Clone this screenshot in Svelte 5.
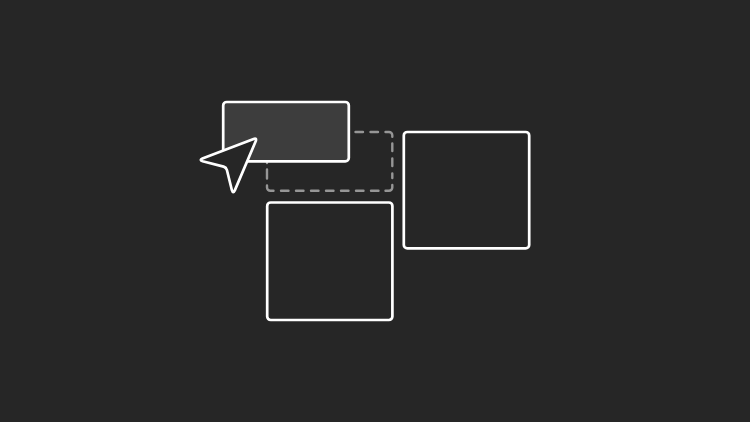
<script>
    // Shapes of the drag-and-drop diagram
    const boxes = [
        { x: 403.8, y: 132, w: 125.4, h: 116.4 },
        { x: 267.2, y: 202.5, w: 125.2, h: 117.5 }
    ];

    // Drop target outline, dash by dash, so the corners land like the design
    const ghost = [
        "M355.5 132h7.5", "M370.5 132h7.5", "M385.5 132h3.5a3.3 3.3 0 0 1 3.3 3.3v1.5",
        "M392.3 143.5v7.5", "M392.3 158.5v7.5", "M392.3 173.5v4.5",
        "M392.3 185v2.5a3.3 3.3 0 0 1 -3.3 3.3h-3.5",
        "M378.5 190.8h-7.5", "M363.5 190.8h-7.5", "M348.5 190.8h-7.5", "M333.5 190.8h-7.5",
        "M318.5 190.8h-7.5", "M303.5 190.8h-7.5", "M288.5 190.8h-7.5",
        "M273.5 190.8h-3.2a3.3 3.3 0 0 1 -3.3 -3.3v-2",
        "M267 178.5v-9", "M267 163v-1"
    ].join(" ");
</script>

<main class="stage">
    <svg class="diagram" viewBox="0 0 750 422" role="img" aria-label="Box being dragged with a cursor between other boxes">
        <path class="ghost" d={ghost} />
        {#each boxes as box}
            <rect class="box" x={box.x} y={box.y} width={box.w} height={box.h} rx="3.5" />
        {/each}
        <rect class="box dragged" x="223.2" y="102" width="125.6" height="59.4" rx="3.5" />
        <path
            class="cursor"
            d="M253.6 139 Q256.8 137.7 255.8 141 L234.8 190.4 Q233 194 231.9 190.2 L226.9 170 Q226.2 167.4 223.6 166.6 L202.6 161.2 Q199 160 202.4 158.6 Z"
        />
    </svg>
</main>

<style>
    :global(body) {
        margin: 0;
        background: #262626;
    }

    .stage {
        width: 750px;
        height: 422px;
        overflow: hidden;
        background: #262626;
    }

    .diagram {
        display: block;
        width: 100%;
        height: 100%;
    }

    .box {
        fill: none;
        stroke: #fff;
        stroke-width: 2.7;
    }

    .dragged { fill: #3d3d3d; }

    .ghost {
        fill: none;
        stroke: #969696;
        stroke-width: 2.4;
        stroke-linecap: round;
    }

    .cursor {
        fill: #262626;
        stroke: #fff;
        stroke-width: 2.7;
        stroke-linejoin: round;
    }
</style>
